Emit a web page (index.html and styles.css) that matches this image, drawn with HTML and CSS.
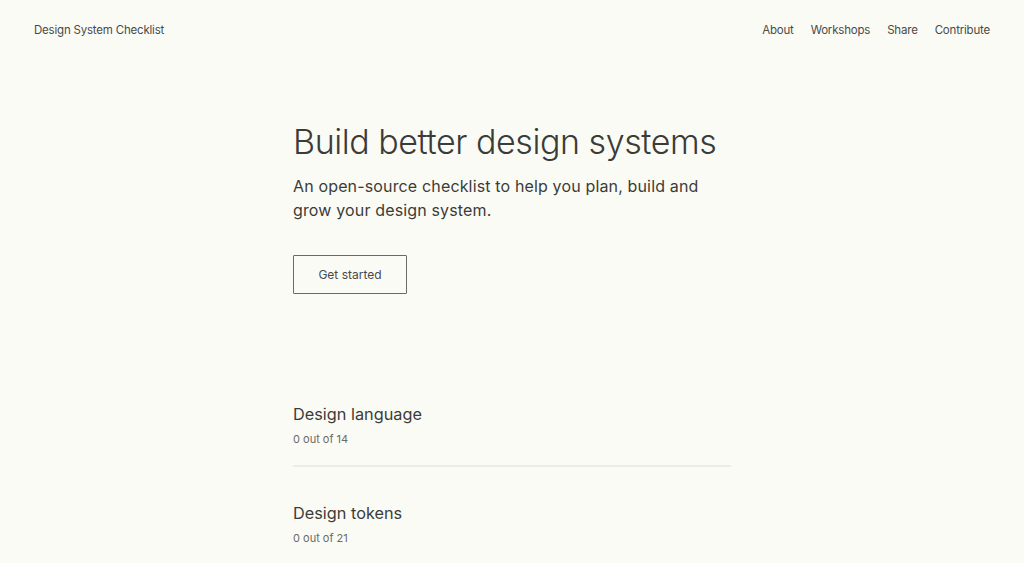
FILE: index.html
```html
<!DOCTYPE html>
<html lang="en">
<head>
  <meta charset="UTF-8">
  <title>Design System Checklist</title>
  <link rel="stylesheet" href="styles.css">
</head>
<body>

  <header class="topbar">
    <a class="brand" href="#">Design System Checklist</a>
    <nav class="nav">
      <a href="#">About</a>
      <a href="#">Workshops</a>
      <a href="#">Share</a>
      <a href="#">Contribute</a>
    </nav>
  </header>

  <main class="content">
    <!-- Hero -->
    <section class="hero">
      <h1>Build better design systems</h1>
      <p class="lead">An open-source checklist to help you plan, build and grow your design system.</p>
      <a class="btn" href="#">Get started</a>
    </section>

    <!-- Categorias -->
    <section class="categories">
      <div class="category">
        <h2>Design language</h2>
        <p class="count">0 out of 14</p>
      </div>
      <div class="category">
        <h2>Design tokens</h2>
        <p class="count">0 out of 21</p>
      </div>
    </section>
  </main>

</body>
</html>
```

FILE: styles.css
```css
body {
  font-family: Inter, "Noto Sans", sans-serif;
  background-color: #fbfbf6;
  color: #3b3b38;
  margin: 0;
  padding: 0;
}

a {
  color: inherit;
  text-decoration: none;
}

.topbar {
  display: flex;
  justify-content: space-between;
  align-items: center;
  padding: 23px 34px 0;
  font-size: 11.5px;
  letter-spacing: -0.2px;
  color: #4a4a46;
}

.nav {
  display: flex;
  gap: 17px;
}

.content {
  width: 438px;
  margin: 0 auto;
}

.hero {
  padding-top: 84px;
}

h1 {
  font-size: 34px;
  font-weight: 300;
  letter-spacing: -0.45px;
  margin: 0 0 12px;
}

.lead {
  font-size: 16px;
  letter-spacing: 0.15px;
  line-height: 24px;
  margin: 0 0 33px;
}

.btn {
  display: inline-block;
  width: 112px;
  height: 37px;
  line-height: 37px;
  text-align: center;
  border: 1px solid #6a6a66;
  border-radius: 1px;
  font-size: 12px;
  color: #4a4a46;
}

.categories {
  margin-top: 110px;
}

.category {
  padding-bottom: 19px;
  border-bottom: 2px solid #ededE7;
  margin-bottom: 36px;
}

h2 {
  font-size: 16.3px;
  font-weight: 400;
  margin: 0 0 8px;
}

.count {
  font-size: 11px;
  color: #6a6a66;
  margin: 0;
}
```
